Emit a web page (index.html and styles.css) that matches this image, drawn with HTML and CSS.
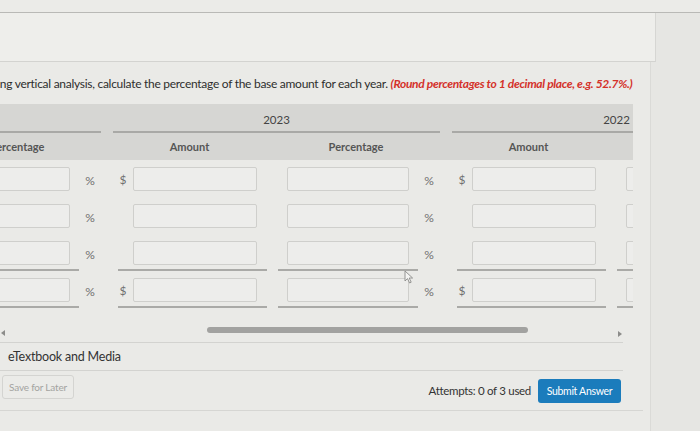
FILE: index.html
```html
<!DOCTYPE html>
<html lang="en">
<head>
  <meta charset="UTF-8">
  <meta name="viewport" content="width=device-width, initial-scale=1.0">
  <link rel="stylesheet" href="styles.css">
  <title>Vertical Analysis</title>
</head>
<body>

  <div class="top-strip"></div>
  <div class="top-bar"></div>

  <div class="panel">
    <p class="prompt"><span class="lead">Using vertical analysis, calculate the percentage of the base amount for each year. <strong class="hint">(Round percentages to 1 decimal place, e.g. 52.7%.)</strong></span></p>

    <div class="scroller">
      <div class="grid">
        <div class="head">
          <div class="years">
            <div class="year">2024</div>
            <div class="year">2023</div>
            <div class="year">2022</div>
          </div>
          <div class="labels">
            <div class="group">
              <div class="lab lab-amt">Amount</div>
              <div class="lab lab-pct">Percentage</div>
            </div>
            <div class="group">
              <div class="lab lab-amt">Amount</div>
              <div class="lab lab-pct">Percentage</div>
            </div>
            <div class="group">
              <div class="lab lab-amt">Amount</div>
              <div class="lab lab-pct">Percentage</div>
            </div>
          </div>
        </div>

        <!-- row 1 -->
        <div class="row">
          <div class="group">
            <div class="cell amt"><span class="sym">$</span><input class="box" type="text"></div>
            <div class="cell pct"><input class="box" type="text"></div>
            <span class="unit">%</span>
          </div>
          <div class="group">
            <div class="cell amt"><span class="sym">$</span><input class="box" type="text"></div>
            <div class="cell pct"><input class="box" type="text"></div>
            <span class="unit">%</span>
          </div>
          <div class="group">
            <div class="cell amt"><span class="sym">$</span><input class="box" type="text"></div>
            <div class="cell pct"><input class="box" type="text"></div>
            <span class="unit">%</span>
          </div>
        </div>

        <!-- row 2 -->
        <div class="row">
          <div class="group">
            <div class="cell amt"><span class="sym"></span><input class="box" type="text"></div>
            <div class="cell pct"><input class="box" type="text"></div>
            <span class="unit">%</span>
          </div>
          <div class="group">
            <div class="cell amt"><span class="sym"></span><input class="box" type="text"></div>
            <div class="cell pct"><input class="box" type="text"></div>
            <span class="unit">%</span>
          </div>
          <div class="group">
            <div class="cell amt"><span class="sym"></span><input class="box" type="text"></div>
            <div class="cell pct"><input class="box" type="text"></div>
            <span class="unit">%</span>
          </div>
        </div>

        <!-- row 3 -->
        <div class="row ruled">
          <div class="group">
            <div class="cell amt"><span class="sym"></span><input class="box" type="text"></div>
            <div class="cell pct"><input class="box" type="text"></div>
            <span class="unit">%</span>
          </div>
          <div class="group">
            <div class="cell amt"><span class="sym"></span><input class="box" type="text"></div>
            <div class="cell pct"><input class="box" type="text"></div>
            <span class="unit">%</span>
          </div>
          <div class="group">
            <div class="cell amt"><span class="sym"></span><input class="box" type="text"></div>
            <div class="cell pct"><input class="box" type="text"></div>
            <span class="unit">%</span>
          </div>
        </div>

        <!-- row 4 (totals) -->
        <div class="row ruled">
          <div class="group">
            <div class="cell amt"><span class="sym">$</span><input class="box" type="text"></div>
            <div class="cell pct"><input class="box" type="text"></div>
            <span class="unit">%</span>
          </div>
          <div class="group">
            <div class="cell amt"><span class="sym">$</span><input class="box" type="text"></div>
            <div class="cell pct"><input class="box" type="text"></div>
            <span class="unit">%</span>
          </div>
          <div class="group">
            <div class="cell amt"><span class="sym">$</span><input class="box" type="text"></div>
            <div class="cell pct"><input class="box" type="text"></div>
            <span class="unit">%</span>
          </div>
        </div>
      </div>
    </div>

    <div class="hscroll">
      <span class="arrow arrow-left"></span>
      <div class="track"><div class="thumb"></div></div>
      <span class="arrow arrow-right"></span>
    </div>

    <div class="media">eTextbook and Media</div>

    <div class="actions">
      <button class="save-btn">Save for Later</button>
      <div class="submit-area">
        <span class="attempts">Attempts: 0 of 3 used</span>
        <button class="submit-btn">Submit Answer</button>
      </div>
    </div>
  </div>

  <!-- mouse pointer sitting over the table -->
  <svg class="pointer" width="10" height="14" viewBox="0 0 10 14">
    <path d="M1 1 L1 11 L3.5 8.6 L5.6 13 L7.2 12.2 L5.2 8 L8.6 8 Z" fill="#f4f4f2" stroke="#8a8a88" stroke-width="0.9" stroke-linejoin="round"/>
  </svg>

</body>
</html>
```

FILE: styles.css
```css
body {
  font-family: Lato, "Open Sans", sans-serif;
  margin: 0;
  padding: 0;
  background-color: #e6e6e3;
  color: #333;
  width: 700px;
  height: 431px;
  overflow: hidden;
}

.top-strip {
  height: 12px;
  background-color: #ebebe8;
  border-bottom: 1px solid #b9b9b6;
}

.top-bar {
  width: 655px;
  height: 48px;
  background-color: #eeeeeb;
  border-right: 1px solid #d6d6d3;
  border-bottom: 1px solid #d3d3d0;
}

.panel {
  width: 650px;
  height: 370px;
  background-color: #eaeae7;
  border-right: 1px solid #dadad7;
}

.prompt {
  margin: 0;
  padding: 14px 0 12px;
  width: 650px;
  line-height: 16px;
  font-size: 12px;
  letter-spacing: -0.28px;
  color: #2e2e2e;
  white-space: nowrap;
  overflow: hidden;
}

.lead {
  display: inline-block;
  margin-left: -16px;
}

.hint {
  color: #d4312a;
  font-style: italic;
  font-weight: bold;
  letter-spacing: -0.32px;
}

/* table */

.scroller {
  width: 633px;
  overflow: hidden;
}

.grid {
  width: 1017px;
  margin-left: -226px;
}

.head {
  background-color: #d6d6d3;
}

.years {
  display: flex;
}

.year {
  flex: none;
  box-sizing: border-box;
  width: 327px;
  margin-right: 12px;
  padding: 8px 0 3px;
  line-height: 16px;
  font-size: 11.5px;
  color: #444;
  text-align: center;
  border-bottom: 2px solid #a9a9a6;
}

.years .year:last-child {
  padding-left: 2px;
}

.labels {
  display: flex;
}

.group {
  display: flex;
  flex: none;
  width: 339px;
}

.lab {
  line-height: 27px;
  font-size: 11px;
  font-weight: bold;
  color: #555;
  text-align: center;
}

.lab-amt {
  margin-left: 2px;
  width: 149px;
}

.lab-pct {
  margin-left: 11px;
  width: 162px;
}

.row {
  display: flex;
}

.cell {
  display: flex;
  align-items: center;
  box-sizing: border-box;
  padding: 7px 0 4px;
  border-bottom: 2px solid transparent;
}

.ruled .cell {
  border-bottom-color: #aaaaa7;
}

.amt {
  margin-left: 5px;
  width: 149px;
}

.pct {
  margin-left: 11px;
  width: 140px;
  padding-left: 9px;
}

.sym {
  width: 10px;
  padding-top: 1px;
  font-size: 12px;
  color: #707070;
  text-align: center;
}

.box {
  box-sizing: border-box;
  width: 122px;
  height: 24px;
  margin: 0;
  padding: 0;
  border: 1px solid #cfcfcc;
  border-radius: 2px;
  background-color: #ededeb;
}

.amt .box {
  width: 124px;
  margin-left: 5px;
}

.unit {
  width: 22px;
  padding-top: 3px;
  align-self: center;
  font-size: 12px;
  color: #707070;
  text-align: center;
}

/* scrollbar under the table */

.hscroll {
  display: flex;
  align-items: flex-start;
  box-sizing: border-box;
  width: 622px;
  height: 34px;
  padding-top: 19px;
}

.arrow {
  width: 0;
  height: 0;
  margin-top: 3px;
  border-top: 3px solid transparent;
  border-bottom: 3px solid transparent;
}

.arrow-left {
  margin-left: 1px;
  border-right: 4px solid #8c8c8a;
}

.arrow-right {
  margin-top: 4px;
  border-left: 4px solid #8c8c8a;
}

.track {
  flex: 1;
  margin: 0 3px 0 2px;
}

.thumb {
  width: 321px;
  height: 6px;
  margin-left: 200px;
  border-radius: 3px;
  background-color: #a2a2a0;
}

/* bottom area */

.media {
  display: flex;
  align-items: center;
  box-sizing: border-box;
  width: 623px;
  height: 29px;
  padding-left: 8px;
  font-size: 12.5px;
  letter-spacing: -0.2px;
  color: #333;
  border-top: 1px solid #d3d3d0;
  border-bottom: 1px solid #d3d3d0;
}

.actions {
  display: flex;
  align-items: center;
  justify-content: space-between;
  box-sizing: border-box;
  width: 643px;
  height: 40px;
  padding: 0 22px 0 2px;
  border-bottom: 1px solid #d6d6d3;
}

.save-btn {
  align-self: flex-start;
  margin-top: 4px;
  width: 72px;
  height: 24px;
  padding: 0;
  font-family: Lato, sans-serif;
  font-size: 10px;
  letter-spacing: -0.2px;
  color: #a4a4a1;
  background-color: #ebebe8;
  border: 1px solid #d4d4d1;
  border-radius: 3px;
}

.submit-area {
  display: flex;
  align-items: center;
  gap: 7px;
}

.attempts {
  font-size: 11.5px;
  letter-spacing: -0.3px;
  color: #333;
}

.submit-btn {
  width: 83px;
  height: 24px;
  padding: 0;
  font-family: Lato, sans-serif;
  font-size: 10.5px;
  letter-spacing: -0.3px;
  color: #fff;
  background-color: #1b7cbc;
  border: none;
  border-radius: 3px;
}

.pointer {
  position: absolute;
  left: 404px;
  top: 270px;
}
```
